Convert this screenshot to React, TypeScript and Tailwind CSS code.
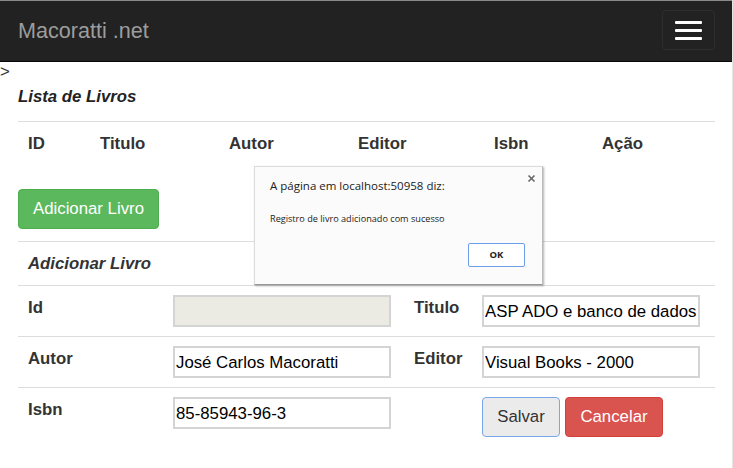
const inputBase =
  "h-[32px] border-2 border-[#d4d4d4] pt-[1px] pl-[1px] pr-0 text-[16.8px] text-black outline-none";

function Field({
  value,
  disabled,
  width,
}: {
  value?: string;
  disabled?: boolean;
  width: string;
}) {
  return (
    <input
      readOnly
      value={value ?? ""}
      className={`${inputBase} ${width} ${disabled ? "bg-[#ebebe4]" : "bg-white"}`}
    />
  );
}

function Label({ children, className }: { children: React.ReactNode; className: string }) {
  return <div className={`pt-[2px] text-[16.8px] leading-[22px] font-bold text-[#333] ${className}`}>{children}</div>;
}

function FormRow({ children }: { children: React.ReactNode }) {
  return <div className="flex h-[51px] items-start border-t border-[#ddd] pt-[9px]">{children}</div>;
}

// The browser's alert box, sitting over the page.
function AlertDialog() {
  return (
    <div className="absolute top-[166px] left-[254px] h-[119px] w-[289px] border border-[#dcdcdc] border-r-[#bbb] border-b-[#999] bg-[#fbfbfb] shadow-[1px_1px_2px_rgba(0,0,0,0.3)] font-['Open_Sans',sans-serif] text-[#222]">
      <button className="absolute top-[7px] right-[6px] text-[#666]">
        <svg width="9" height="9" viewBox="0 0 9 9" className="block">
          <path d="M1.5 1.5l6 6M7.5 1.5l-6 6" stroke="currentColor" strokeWidth="1.6" fill="none" />
        </svg>
      </button>
      <p className="pt-[11px] pl-[15px] text-[11.5px] leading-[16px]">A página em localhost:50958 diz:</p>
      <p className="pt-[18px] pl-[15px] text-[9.15px] leading-[14px]">Registro de livro adicionado com sucesso</p>
      <button className="absolute top-[76px] left-[213px] h-[24px] w-[57px] rounded-[2px] border border-[#6d9eeb] bg-white text-[9.5px] font-bold text-[#222]">
        OK
      </button>
    </div>
  );
}

export default function App() {
  return (
    <div className="relative h-[468px] w-[733px] overflow-hidden bg-white font-['Liberation_Sans',sans-serif]">
      <nav className="flex h-[62px] items-center justify-between border-t border-b border-t-[#8a8a8a] border-b-[#080808] bg-[#222] pr-[18px] pl-[18px]">
        <span className="text-[21.6px] text-[#9d9d9d]">Macoratti .net</span>
        <button className="mb-[2px] flex h-[40px] w-[53px] flex-col items-center justify-center gap-[5px] rounded-[4px] border border-[#2e2e2e]">
          <span className="h-[3px] w-[27px] rounded-[1px] bg-white" />
          <span className="h-[3px] w-[27px] rounded-[1px] bg-white" />
          <span className="h-[3px] w-[27px] rounded-[1px] bg-white" />
        </button>
      </nav>

      <div className="text-[16.8px] leading-[20px] text-[#333]">&gt;</div>

      <main className="mr-[18px] ml-[18px]">
        <h4 className="h-[39px] pt-[4px] text-[16.8px] leading-[22px] font-bold text-[#222] italic">Lista de Livros</h4>

        <div className="grid h-[68px] grid-cols-[72px_129px_129px_136px_108px_1fr] border-t border-[#ddd] pt-[11px] pl-[10px] text-[16.8px] leading-[22px] font-bold text-[#333]">
          <span>ID</span>
          <span>Titulo</span>
          <span>Autor</span>
          <span>Editor</span>
          <span>Isbn</span>
          <span>Ação</span>
        </div>

        <button className="h-[40px] w-[141px] rounded-[4px] border border-[#4cae4c] bg-[#5cb85c] text-[16.8px] text-white">
          Adicionar Livro
        </button>

        <div className="mt-[12px] h-[44px] border-t border-[#ddd] pt-[11px] pl-[10px] text-[16.8px] leading-[22px] font-bold text-[#333] italic">
          Adicionar Livro
        </div>

        <FormRow>
          <Label className="w-[155px] pl-[10px]">Id</Label>
          <Field disabled width="w-[218px]" />
          <Label className="w-[91px] pl-[23px]">Titulo</Label>
          <Field value="ASP ADO e banco de dados" width="w-[218px]" />
        </FormRow>
        <FormRow>
          <Label className="w-[155px] pl-[10px]">Autor</Label>
          <Field value="José Carlos Macoratti" width="w-[218px]" />
          <Label className="w-[91px] pl-[23px]">Editor</Label>
          <Field value="Visual Books - 2000" width="w-[218px]" />
        </FormRow>
        <FormRow>
          <Label className="w-[155px] pl-[10px]">Isbn</Label>
          <Field value="85-85943-96-3" width="w-[218px]" />
          <div className="ml-[91px] flex gap-[5px]">
            <button className="h-[40px] w-[78px] rounded-[4px] border border-[#7aa7e9] bg-[#ebebeb] text-[16.8px] text-[#333]">
              Salvar
            </button>
            <button className="h-[40px] w-[98px] rounded-[4px] border border-[#d43f3a] bg-[#d9534f] text-[16.8px] text-white">
              Cancelar
            </button>
          </div>
        </FormRow>
      </main>

      <AlertDialog />
      <div className="absolute top-0 right-0 h-full w-[1px] bg-[#e4e4e4]" />
    </div>
  );
}
